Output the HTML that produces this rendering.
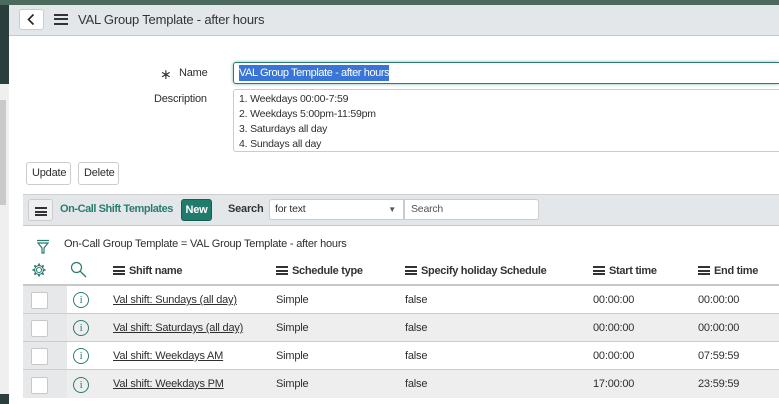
<!DOCTYPE html>
<html><head><style>
*{box-sizing:border-box;margin:0;padding:0}
body{width:779px;height:404px;overflow:hidden;background:#fff;font-family:"Liberation Sans",sans-serif;font-size:11px;color:#2e2e2e;position:relative;letter-spacing:-0.2px}
.a{position:absolute}
.hb{display:inline-block;width:12px;height:9px;border-top:2px solid #333;border-bottom:2px solid #333;position:relative;vertical-align:-1px;margin-right:4px}
.hb:after{content:"";position:absolute;left:0;right:0;top:1.5px;height:2px;background:#333}
.btn{border:1px solid #ccc;border-radius:3px;background:#fff;height:23px;line-height:21px;padding:0 5px;font-size:11px}
.th{top:258px;height:26px;line-height:26px;font-weight:bold;color:#333;font-size:11px;letter-spacing:-0.3px}
.row{left:23px;width:756px;height:28px;border-bottom:1px solid #ccc}
.cb{left:31px;width:17px;height:17px;border:1px solid #c8c8c8;border-radius:2px;background:#fff}
.cell{line-height:28px}
.lnk{text-decoration:underline;color:#2e2e2e}
.info{width:16px;height:16px;border:1.3px solid #2b7b6f;border-radius:50%;color:#2b7b6f;font-size:11px;text-align:center;line-height:14px;font-family:"Liberation Serif",serif}
</style></head><body>
<div class="a" style="left:0;top:0;width:779px;height:5px;background:#4c6b5e"></div>
<div class="a" style="left:0;top:5px;width:9px;height:79px;background:#2a3f3d"></div>
<div class="a" style="left:0;top:84px;width:9px;height:310px;background:#efefef"></div>
<div class="a" style="left:0;top:100px;width:6px;height:105px;background:#c9c9c9"></div>
<div class="a" style="left:0;top:394px;width:9px;height:10px;background:#2a3f3d"></div>
<div class="a" style="left:9px;top:5px;width:770px;height:31px;background:#e4e7e9;border-bottom:1px solid #c8c8c8"></div>
<div class="a" style="left:19px;top:9px;width:25px;height:21px;border:1px solid #ccc;border-radius:3px;background:#fff"><svg width="23" height="19" viewBox="0 0 23 19"><path d="M13.5 4.5L8.5 9.5l5 5" fill="none" stroke="#222" stroke-width="1.6"/></svg></div>
<div class="a" style="left:54px;top:14px"><span class="hb" style="width:14px;height:11px;border-width:2px"></span></div>
<div class="a" style="left:78px;top:12px;font-size:13px;color:#333">VAL Group Template - after hours</div>
<div class="a" style="left:160px;top:66px;font-size:14px;color:#333">&#x2217;</div>
<div class="a" style="left:179px;top:67px;font-size:11px">Name</div>
<div class="a" style="left:233px;top:62px;width:546px;height:22px;border:1px solid #2b7b6f;border-right:none;border-radius:3px 0 0 3px;box-shadow:0 0 3px #7fb9ae"></div>
<div class="a" style="left:239px;top:65px;background:#3875d7;color:#fff;font-size:11px;padding:1px 0;line-height:14px;letter-spacing:-0.4px">VAL Group Template - after hours</div>
<div class="a" style="left:154px;top:93px">Description</div>
<div class="a" style="left:233px;top:89px;width:546px;height:63px;border:1px solid #ccc;border-right:none;border-radius:3px 0 0 3px;padding:2px 5px;line-height:15px;font-size:10.5px">1. Weekdays 00:00-7:59<br>2. Weekdays 5:00pm-11:59pm<br>3. Saturdays all day<br>4. Sundays all day</div>
<div class="a btn" style="left:26px;top:162px;width:45px">Update</div>
<div class="a btn" style="left:78px;top:162px;width:41px">Delete</div>
<div class="a" style="left:23px;top:194px;width:756px;height:32px;background:#e4e7e9;border-top:1px solid #d0d0d0;border-bottom:1px solid #c8c8c8"></div>
<div class="a" style="left:28px;top:199px;width:25px;height:22px;border:1px solid #ccc;border-radius:3px;background:#eef0f1;padding:6px 0 0 6px"><span class="hb"></span></div>
<div class="a" style="left:60px;top:203px;color:#2b7b6f;font-weight:bold;font-size:11px;letter-spacing:-0.45px">On-Call Shift Templates</div>
<div class="a" style="left:181px;top:199px;width:31px;height:22px;background:#1f7c6c;border:1px solid #155e51;border-radius:3px;color:#fff;font-weight:bold;text-align:center;line-height:20px">New</div>
<div class="a" style="left:228px;top:203px;font-weight:bold;color:#333">Search</div>
<div class="a" style="left:269px;top:199px;width:135px;height:21px;border:1px solid #ccc;border-radius:3px 0 0 3px;background:#fff;padding-left:5px;line-height:19px;font-size:10.5px">for text<span style="position:absolute;right:7px;font-size:8px;color:#555">&#9660;</span></div>
<div class="a" style="left:404px;top:199px;width:135px;height:21px;border:1px solid #ccc;border-radius:0 3px 3px 0;background:#fff;padding-left:6px;line-height:19px;font-size:10.5px;color:#555">Search</div>
<svg class="a" style="left:36px;top:239px" width="14" height="16" viewBox="0 0 14 16"><path d="M1 1.5h12M2 4h10L8 9v5H6V9z" fill="none" stroke="#2b7b6f" stroke-width="1.2"/></svg>
<div class="a" style="left:64px;top:238px">On-Call Group Template = VAL Group Template - after hours</div>
<svg class="a" style="left:31px;top:262px" width="16" height="16" viewBox="0 0 16 16"><circle cx="8" cy="8" r="2.5" fill="none" stroke="#2b7b6f" stroke-width="1.1"/><path d="M8 1.5v2.2M8 12.3v2.2M1.5 8h2.2M12.3 8h2.2M3.4 3.4l1.6 1.6M11 11l1.6 1.6M3.4 12.6L5 11M11 5l1.6-1.6" stroke="#2b7b6f" stroke-width="1.8"/><circle cx="8" cy="8" r="4.4" fill="none" stroke="#2b7b6f" stroke-width="1.1"/></svg>
<svg class="a" style="left:70px;top:261px" width="17" height="17" viewBox="0 0 17 17"><circle cx="6.5" cy="6.5" r="5" fill="none" stroke="#2b7b6f" stroke-width="1.2"/><path d="M10.2 10.2L16 16" stroke="#2b7b6f" stroke-width="1.3"/></svg>
<div class="a th" style="left:113px"><span class="hb"></span>Shift name</div>
<div class="a th" style="left:276px"><span class="hb"></span>Schedule type</div>
<div class="a th" style="left:405px"><span class="hb"></span>Specify holiday Schedule</div>
<div class="a th" style="left:593px"><span class="hb"></span>Start time</div>
<div class="a th" style="left:698px"><span class="hb"></span>End time</div>
<div class="a" style="left:23px;top:284px;width:756px;height:2px;background:#c8c8c8"></div>

<div class="a row" style="top:286px;background:#fff"></div>
<div class="a row" style="top:314px;background:#eeeeee"></div>
<div class="a row" style="top:342px;background:#fff"></div>
<div class="a row" style="top:370px;background:#eeeeee;border-bottom:none"></div>
<div class="a" style="left:23px;top:286px;width:44px;height:112px;background:#e6e8ea"></div>
<div class="a" style="left:23px;top:313px;width:44px;height:1px;background:#ccc"></div>
<div class="a" style="left:23px;top:341px;width:44px;height:1px;background:#ccc"></div>
<div class="a" style="left:23px;top:369px;width:44px;height:1px;background:#ccc"></div>

<div class="a cb" style="top:292px"></div><div class="a cb" style="top:320px"></div><div class="a cb" style="top:348px"></div><div class="a cb" style="top:377px"></div>
<div class="a info" style="left:73px;top:292px">i</div><div class="a info" style="left:73px;top:320px">i</div><div class="a info" style="left:73px;top:348px">i</div><div class="a info" style="left:73px;top:377px">i</div>

<div class="a cell" style="top:286px;left:113px"><span class="lnk">Val shift: Sundays (all day)</span></div>
<div class="a cell" style="top:314px;left:113px"><span class="lnk">Val shift: Saturdays (all day)</span></div>
<div class="a cell" style="top:342px;left:113px"><span class="lnk">Val shift: Weekdays AM</span></div>
<div class="a cell" style="top:370px;left:113px"><span class="lnk">Val shift: Weekdays PM</span></div>
<div class="a cell" style="top:286px;left:276px">Simple</div><div class="a cell" style="top:314px;left:276px">Simple</div><div class="a cell" style="top:342px;left:276px">Simple</div><div class="a cell" style="top:370px;left:276px">Simple</div>
<div class="a cell" style="top:286px;left:405px">false</div><div class="a cell" style="top:314px;left:405px">false</div><div class="a cell" style="top:342px;left:405px">false</div><div class="a cell" style="top:370px;left:405px">false</div>
<div class="a cell" style="top:286px;left:593px">00:00:00</div><div class="a cell" style="top:314px;left:593px">00:00:00</div><div class="a cell" style="top:342px;left:593px">00:00:00</div><div class="a cell" style="top:370px;left:593px">17:00:00</div>
<div class="a cell" style="top:286px;left:698px">00:00:00</div><div class="a cell" style="top:314px;left:698px">00:00:00</div><div class="a cell" style="top:342px;left:698px">07:59:59</div><div class="a cell" style="top:370px;left:698px">23:59:59</div>
</body></html>
